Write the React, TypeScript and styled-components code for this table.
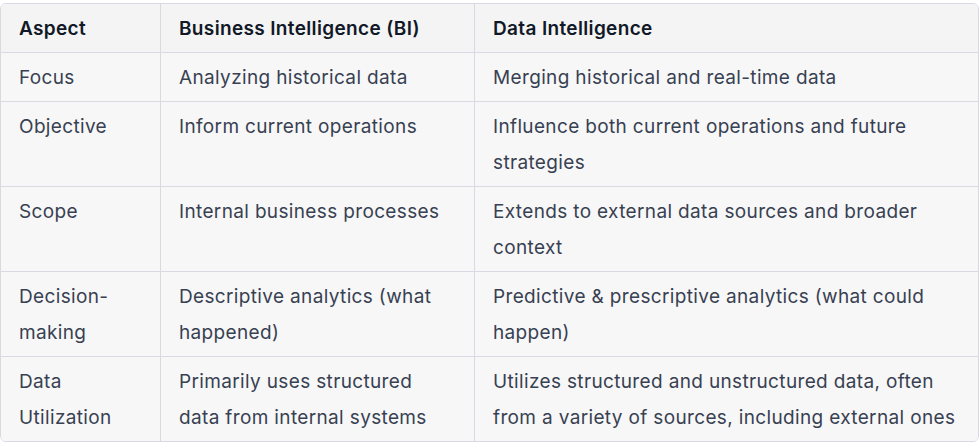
import React from "react";
import styled, { createGlobalStyle } from "styled-components";

const Global = createGlobalStyle`
  html, body { margin: 0; padding: 0; background: #ffffff; }
  body { font-family: Inter, "Noto Sans", sans-serif; }
`;

const Wrap = styled.div`
  width: 980px;
  padding-top: 3px;
  box-sizing: border-box;
`;

const Table = styled.table`
  width: 979px;
  border-collapse: separate;
  border-spacing: 0;
  border: 1px solid #d9d9e3;
  border-radius: 6px;
  overflow: hidden;
  table-layout: fixed;
  font-size: 19px;
  letter-spacing: 0.35px;
  line-height: 36px;
  color: #374151;
`;

const Col = styled.col<{ $w?: number }>`
  width: ${(p) => (p.$w ? `${p.$w}px` : "auto")};
`;

const Th = styled.th<{ $last?: boolean }>`
  box-sizing: border-box;
  text-align: left;
  font-weight: 600;
  color: #111827;
  background: #f4f4f4;
  padding: 7px 18px 5px 18px;
  border-bottom: 1px solid #d9d9e3;
  border-right: ${(p) => (p.$last ? "none" : "1px solid #d9d9e3")};
  vertical-align: top;
`;

const Td = styled.td<{ $last?: boolean; $bottom?: boolean }>`
  box-sizing: border-box;
  background: #f7f7f8;
  padding: 7px 16px 5px 18px;
  border-bottom: ${(p) => (p.$bottom ? "none" : "1px solid #d9d9e3")};
  border-right: ${(p) => (p.$last ? "none" : "1px solid #d9d9e3")};
  vertical-align: top;
`;

const rows: [string, string, string][] = [
  ["Focus", "Analyzing historical data", "Merging historical and real-time data"],
  ["Objective", "Inform current operations", "Influence both current operations and future strategies"],
  ["Scope", "Internal business processes", "Extends to external data sources and broader context"],
  ["Decision-making", "Descriptive analytics (what happened)", "Predictive & prescriptive analytics (what could happen)"],
  [
    "Data Utilization",
    "Primarily uses structured data from internal systems",
    "Utilizes structured and unstructured data, often from a variety of sources, including external ones",
  ],
];

export default function App() {
  return (
    <>
      <Global />
      <Wrap>
        <Table>
          <colgroup>
            <Col $w={160} />
            <Col $w={314} />
            <Col />
          </colgroup>
          <thead>
            <tr>
              <Th>Aspect</Th>
              <Th>Business Intelligence (BI)</Th>
              <Th $last>Data Intelligence</Th>
            </tr>
          </thead>
          <tbody>
            {rows.map((r, i) => (
              <tr key={i}>
                {r.map((c, j) => (
                  <Td key={j} $last={j === 2} $bottom={i === rows.length - 1}>
                    {c}
                  </Td>
                ))}
              </tr>
            ))}
          </tbody>
        </Table>
      </Wrap>
    </>
  );
}
